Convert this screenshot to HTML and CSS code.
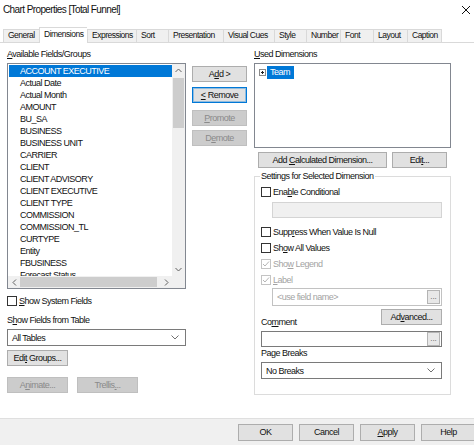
FILE: index.html
```html
<!DOCTYPE html>
<html>
<head>
<meta charset="utf-8">
<title>Chart Properties</title>
<link rel="stylesheet" href="styles.css">
</head>
<body>
<div class="titlebar">
  <span class="title">Chart Properties [Total Funnel]</span>
  <svg class="close" width="10" height="10" viewBox="0 0 10 10"><path d="M1 1L9 9M9 1L1 9" stroke="#111" stroke-width="1" fill="none"/></svg>
</div>
<div class="tabs">
  <div class="tab">General</div>
  <div class="tab active">Dimensions</div>
  <div class="tab">Expressions</div>
  <div class="tab">Sort</div>
  <div class="tab">Presentation</div>
  <div class="tab">Visual Cues</div>
  <div class="tab">Style</div>
  <div class="tab">Number</div>
  <div class="tab">Font</div>
  <div class="tab">Layout</div>
  <div class="tab last">Caption</div>
</div>
<div class="page">
  <div class="col-left">
    <div class="label"><u>A</u>vailable Fields/Groups</div>
    <div class="listbox">
      <div class="items">
        <div class="item sel">ACCOUNT EXECUTIVE</div>
        <div class="item">Actual Date</div>
        <div class="item">Actual Month</div>
        <div class="item">AMOUNT</div>
        <div class="item">BU_SA</div>
        <div class="item">BUSINESS</div>
        <div class="item">BUSINESS UNIT</div>
        <div class="item">CARRIER</div>
        <div class="item">CLIENT</div>
        <div class="item">CLIENT ADVISORY</div>
        <div class="item">CLIENT EXECUTIVE</div>
        <div class="item">CLIENT TYPE</div>
        <div class="item">COMMISSION</div>
        <div class="item">COMMISSION_TL</div>
        <div class="item">CURTYPE</div>
        <div class="item">Entity</div>
        <div class="item">FBUSINESS</div>
        <div class="item">Forecast Status</div>
      </div>
      <div class="vscroll">
        <div class="sarrow"><svg width="7" height="5" viewBox="0 0 7 5"><path d="M0.5 4L3.5 1L6.5 4" stroke="#606060" fill="none"/></svg></div>
        <div class="vthumb"></div>
        <div class="vtrack"></div>
        <div class="sarrow"><svg width="7" height="5" viewBox="0 0 7 5"><path d="M0.5 1L3.5 4L6.5 1" stroke="#606060" fill="none"/></svg></div>
      </div>
      <div class="hscroll">
        <div class="harrow"><svg width="5" height="7" viewBox="0 0 5 7"><path d="M4 0.5L1 3.5L4 6.5" stroke="#606060" fill="none"/></svg></div>
        <div class="hthumb"></div>
        <div class="htrack"></div>
        <div class="harrow"><svg width="5" height="7" viewBox="0 0 5 7"><path d="M1 0.5L4 3.5L1 6.5" stroke="#606060" fill="none"/></svg></div>
      </div>
      <div class="corner"></div>
    </div>
    <div class="chk sys"><span class="box"></span><span><u>S</u>how System Fields</span></div>
    <div class="label fields-label">S<u>h</u>ow Fields from Table</div>
    <div class="select tables-select"><span>All Tables</span><svg width="8" height="5" viewBox="0 0 8 5"><path d="M0.5 0.5L4 4L7.5 0.5" stroke="#707070" fill="none"/></svg></div>
    <div class="btn btn-groups">Edi<u>t</u> Groups...</div>
    <div class="btn-row">
      <div class="btn disabled w61">A<u>n</u>imate...</div>
      <div class="btn disabled w61">Trellis<u>.</u>..</div>
    </div>
  </div>

  <div class="col-mid">
    <div class="btn b-add">A<u>d</u>d &gt;</div>
    <div class="btn b-remove focus"><u>&lt;</u> Remove</div>
    <div class="btn b-promote disabled"><u>P</u>romote</div>
    <div class="btn b-demote disabled">D<u>e</u>mote</div>
  </div>

  <div class="col-right">
    <div class="label"><u>U</u>sed Dimensions</div>
    <div class="usedbox">
      <div class="tree-row">
        <svg class="expander" width="7" height="7" viewBox="0 0 7 7"><rect x="0.5" y="0.5" width="6" height="6" fill="#fff" stroke="#8a8a8a"/><path d="M2 3.5H5M3.5 2V5" stroke="#222"/></svg>
        <span class="team">Team</span>
      </div>
    </div>
    <div class="calc-row">
      <div class="btn w129">Add <u>C</u>alculated Dimension...</div>
      <div class="btn w55">Edi<u>t</u>...</div>
    </div>
    <fieldset class="group">
      <legend>Settings for Selected Dimension</legend>
      <div class="chk c-enable"><span class="box"></span><span>Ena<u>b</u>le Conditional</span></div>
      <div class="field cond-field"></div>
      <div class="chk c-suppress"><span class="box"></span><span>Supp<u>r</u>ess When Value Is Null</span></div>
      <div class="chk c-gap"><span class="box"></span><span>Sh<u>o</u>w All Values</span></div>
      <div class="chk c-gap dis"><span class="box"><svg width="8" height="8" viewBox="0 0 8 8"><path d="M1 4L3 6L7 1.5" stroke="#b5b5b5" fill="none"/></svg></span><span>Sho<u>w</u> Legend</span></div>
      <div class="chk c-gap dis"><span class="box"><svg width="8" height="8" viewBox="0 0 8 8"><path d="M1 4L3 6L7 1.5" stroke="#b5b5b5" fill="none"/></svg></span><span><u>L</u>abel</span></div>
      <div class="field label-field"><span>&lt;use field name&gt;</span><span class="dots">...</span></div>
      <div class="adv-row">
        <span class="comment-label">Co<u>m</u>ment</span>
        <div class="btn w61">Ad<u>v</u>anced...</div>
      </div>
      <div class="field comment-field"><span></span><span class="dots">...</span></div>
      <div class="label">Pa<u>g</u>e Breaks</div>
      <div class="select breaks-select"><span>No Breaks</span><svg width="8" height="5" viewBox="0 0 8 5"><path d="M0.5 0.5L4 4L7.5 0.5" stroke="#707070" fill="none"/></svg></div>
    </fieldset>
  </div>
</div>
<div class="footer">
  <div class="btn w55">OK</div>
  <div class="btn w55">Cancel</div>
  <div class="btn w55"><u>A</u>pply</div>
  <div class="btn w55">Help</div>
</div>
</body>
</html>
```
FILE: styles.css
```css
* { box-sizing: border-box; }
html, body { margin: 0; padding: 0; }
body {
  width: 474px;
  height: 445px;
  overflow: hidden;
  background: #fff;
  font-family: "Liberation Sans", Arial, sans-serif;
  font-size: 9px;
  letter-spacing: -0.5px;
  line-height: 12px;
  color: #111;
  display: flex;
  flex-direction: column;
}
u { text-decoration: underline; text-underline-offset: 1px; }

/* title bar */
.titlebar {
  height: 20px;
  flex: none;
  display: flex;
  align-items: center;
  justify-content: space-between;
  padding: 0 3px 0 3px;
  font-size: 10px;
  letter-spacing: -0.6px;
}

/* tabs */
.tabs {
  flex: none;
  display: flex;
  align-items: flex-end;
  height: 16px;
  margin-top: 7px;
  padding-left: 3px;
  border-bottom: 1px solid #d9d9d9;
}
.tab {
  height: 13px;
  border-top: 1px solid #d9d9d9;
  border-left: 1px solid #d9d9d9;
  background: #f0f0f0;
  padding-left: 4px;
  line-height: 11px;
  font-size: 8.5px;
  white-space: nowrap;
  overflow: hidden;
}
.tab.last { border-right: 1px solid #d9d9d9; }
.tab.active {
  height: 16px;
  margin-bottom: -1px;
  background: #fff;
  padding-top: 1px;
}
.tab:nth-child(1) { width: 36px; }
.tab:nth-child(2) { width: 48px; }
.tab:nth-child(3) { width: 49px; }
.tab:nth-child(4) { width: 32px; }
.tab:nth-child(5) { width: 55px; }
.tab:nth-child(6) { width: 51px; }
.tab:nth-child(7) { width: 32px; }
.tab:nth-child(8) { width: 34px; }
.tab:nth-child(9) { width: 33px; }
.tab:nth-child(10) { width: 34px; }
.tab:nth-child(11) { width: 35px; }

/* page */
.page {
  flex: 1;
  display: flex;
  padding: 5px 0 0 7px;
}
.col-left { width: 179px; display: flex; flex-direction: column; }
.col-mid { width: 55px; margin-left: 6px; display: flex; flex-direction: column; padding-top: 18px; }
.col-right { width: 197px; margin-left: 7px; display: flex; flex-direction: column; }

.label { height: 12px; line-height: 12px; margin-bottom: 3px; white-space: nowrap; }

/* list box */
.listbox {
  height: 226px;
  border: 1px solid #828790;
  display: grid;
  grid-template-columns: 164px 13px;
  grid-template-rows: 212px 12px;
}
.items { padding: 1px 0 0 1px; overflow: hidden; }
.item { height: 12px; line-height: 12px; padding-left: 11px; white-space: nowrap; }
.item.sel { background: #0078d7; color: #fff; }
.vscroll { background: #f0f0f0; display: flex; flex-direction: column; }
.sarrow { height: 13px; flex: none; display: flex; align-items: center; justify-content: center; }
.vthumb { height: 50px; margin: 1px 1px 0 1px; background: #cdcdcd; flex: none; }
.vtrack { flex: 1; }
.hscroll { background: #f0f0f0; display: flex; }
.harrow { width: 12px; flex: none; display: flex; align-items: center; justify-content: center; }
.hthumb { width: 137px; margin: 1px 0; background: #cdcdcd; flex: none; }
.htrack { flex: 1; }
.corner { background: #f0f0f0; }

/* check boxes */
.chk { display: flex; align-items: center; height: 10px; white-space: nowrap; }
.box {
  width: 10px; height: 10px; flex: none;
  border: 1px solid #333;
  background: #fff;
  margin-right: 2px;
  display: flex; align-items: center; justify-content: center;
}
.chk.dis { color: #a3a3a3; }
.chk.dis .box { border-color: #c4c4c4; }
.sys { margin-top: 7px; }
.fields-label { margin-top: 8px; margin-bottom: 3px; }

/* selects and fields */
.select {
  height: 17px;
  border: 1px solid #7a7a7a;
  background: #fff;
  display: flex;
  align-items: center;
  justify-content: space-between;
  padding: 0 6px 0 4px;
}
.field {
  border: 1px solid #7a7a7a;
  background: #fff;
  display: flex;
  align-items: center;
  justify-content: space-between;
  padding-left: 4px;
}
.dots {
  width: 13px; height: 14px;
  margin-right: 1px;
  border: 1px solid #b4b4b4;
  background: #e8e8e8;
  font-size: 8px;
  letter-spacing: 0;
  line-height: 12px;
  text-align: center;
  color: #555;
}

/* buttons */
.btn {
  height: 16px;
  border: 1px solid #adadad;
  background: #e1e1e1;
  display: block;
  text-align: center;
  line-height: 14px;
  white-space: nowrap;
  flex: none;
}
.btn.disabled { background: #cccccc; border-color: #bfbfbf; color: #8a8a8a; }
.btn.focus { border-color: #0078d7; box-shadow: inset 0 0 0 1px rgba(0, 120, 215, 0.35); }
.w55 { width: 55px; }
.w61 { width: 61px; }
.w129 { width: 129px; }
.btn-groups { width: 61px; margin-top: 4px; }
.btn-row { display: flex; gap: 9px; margin-top: 11px; }

.b-remove { margin-top: 5px; }
.b-promote { margin-top: 7px; }
.b-demote { margin-top: 4px; }

/* right column */
.usedbox { height: 85px; border: 1px solid #828790; padding: 2px 0 0 4px; }
.tree-row { display: flex; align-items: center; height: 13px; }
.expander { margin-right: 1px; flex: none; }
.team { background: #0078d7; color: #fff; height: 13px; line-height: 13px; padding: 0 4px 0 3px; }
.calc-row { display: flex; gap: 5px; padding-left: 4px; margin-top: 4px; }

.group {
  margin: 2px 0 0 0;
  padding: 0 8px 15px 6px;
  border: 1px solid #dcdcdc;
  min-width: 0;
}
.group legend { padding: 0 1px; margin-left: -1px; height: 12px; line-height: 12px; }
.c-enable { margin-top: 5px; }
.cond-field { height: 16px; margin: 5px 0 0 11px; background: #f0f0f0; border-color: #d4d4d4; }
.c-suppress { margin-top: 9px; }
.c-gap { margin-top: 6px; }
.label-field { height: 18px; margin: 3px 0 0 11px; border-color: #c2c2c2; color: #a3a3a3; }
.adv-row { display: flex; justify-content: space-between; align-items: flex-end; margin-top: 3px; }
.comment-label { margin-bottom: -3px; line-height: 12px; }
.comment-field { height: 16px; margin-top: 6px; }
.breaks-select { margin-top: 2px; }

/* footer */
.footer {
  flex: none;
  height: 27px;
  border-top: 1px solid #dfdfdf;
  background: #f0f0f0;
  display: flex;
  gap: 6px;
  padding: 5px 0 0 238px;
}
.footer .btn { height: 17px; line-height: 15px; }
```
